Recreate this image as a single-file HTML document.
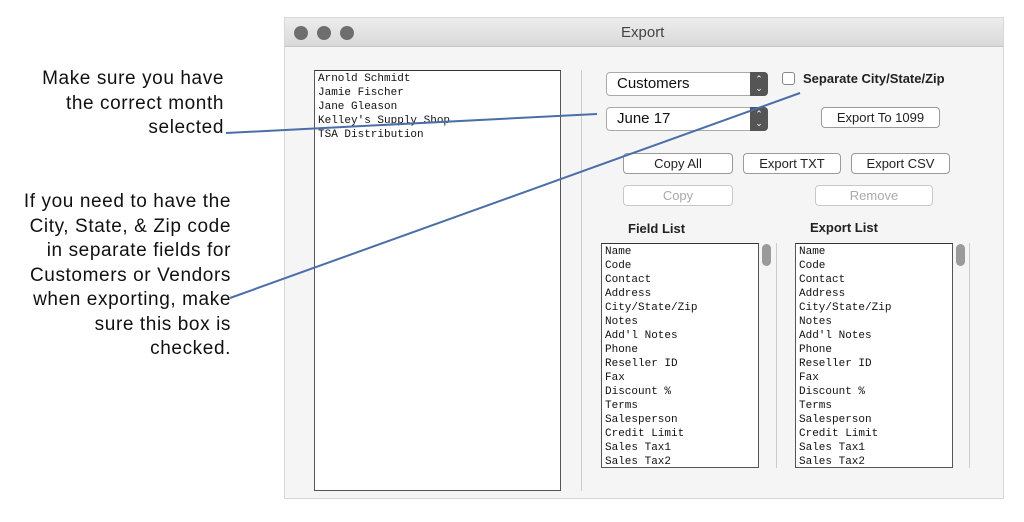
<!DOCTYPE html>
<html><head><style>
*{margin:0;padding:0;box-sizing:border-box}
body{width:1024px;height:522px;background:#fff;position:relative;overflow:hidden;font-family:"Liberation Sans",sans-serif}
.a{position:absolute}
.win{left:284px;top:17px;width:720px;height:482px;background:#f5f5f5;border:1px solid #d8d8d8}
.title{left:0;top:0;width:718px;height:29px;background:linear-gradient(#ededed,#d9d9d9);border-bottom:1px solid #c4c4c4}
.dot{width:14px;height:14px;border-radius:50%;background:#6e6e6e;top:8px}
.box{background:#fff;border:1px solid #555;border-top-color:#333;font-family:"Liberation Mono",monospace;font-size:11px;line-height:14px;color:#111;padding:1px 3px 0;white-space:pre}
.btn{background:#fff;border:1px solid #9a9a9a;border-radius:4px;font-size:13px;text-align:center;color:#222}
.dis{color:#aaa;border-color:#c8c8c8}
.sel{background:#fff;border:1px solid #aaa;border-radius:4px;font-size:15px;padding-left:10px;color:#111}
.arr{position:absolute;right:-1px;top:-1px;width:18px;bottom:-1px;background:#555;border-radius:0 4px 4px 0;color:#fff;font-size:9px;text-align:center;line-height:9px;padding-top:3px}
.txt{font-size:19px;letter-spacing:0.6px;color:#111;text-align:right;line-height:24.5px}
.sep{width:1px;background:#ccc}
.thumb{width:9px;height:22px;background:#9a9a9a;border-radius:5px}
</style></head><body>
<div class="a txt" style="left:0px;top:67px;width:224px">Make sure you have<br>the correct month<br>selected</div>
<div class="a txt" style="left:0px;top:190px;width:231px">If you need to have the<br>City, State, &amp; Zip code<br>in separate fields for<br>Customers or Vendors<br>when exporting, make<br>sure this box is<br>checked.</div>
<div class="a win">
 <div class="a title"></div>
 <div class="a dot" style="left:9px"></div><div class="a dot" style="left:32px"></div><div class="a dot" style="left:55px"></div>
 <div class="a" style="left:336px;top:6px;font-size:15px;color:#444">Export</div>
</div>
<div class="a box" style="left:314px;top:70px;width:247px;height:421px">Arnold Schmidt
Jamie Fischer
Jane Gleason
Kelley's Supply Shop
TSA Distribution</div>
<div class="a sep" style="left:581px;top:70px;height:421px"></div>
<div class="a sel" style="left:606px;top:72px;width:162px;height:24px;line-height:22px">Customers<div class="arr">⌃<br>⌄</div></div>
<div class="a sel" style="left:606px;top:107px;width:162px;height:24px;line-height:22px">June 17<div class="arr">⌃<br>⌄</div></div>
<div class="a" style="left:782px;top:72px;width:13px;height:13px;border:1px solid #888;border-radius:3px;background:#fff"></div>
<div class="a" style="left:803px;top:71px;font-size:13px;font-weight:bold;color:#222">Separate City/State/Zip</div>
<div class="a btn" style="left:821px;top:107px;width:119px;height:21px;line-height:19px">Export To 1099</div>
<div class="a btn" style="left:623px;top:153px;width:110px;height:21px;line-height:19px">Copy All</div>
<div class="a btn" style="left:743px;top:153px;width:98px;height:21px;line-height:19px">Export TXT</div>
<div class="a btn" style="left:851px;top:153px;width:99px;height:21px;line-height:19px">Export CSV</div>
<div class="a btn dis" style="left:623px;top:185px;width:110px;height:21px;line-height:19px">Copy</div>
<div class="a btn dis" style="left:815px;top:185px;width:118px;height:21px;line-height:19px">Remove</div>
<div class="a" style="left:628px;top:221px;font-size:13px;font-weight:bold;color:#222">Field List</div>
<div class="a" style="left:810px;top:220px;font-size:13px;font-weight:bold;color:#222">Export List</div>
<div class="a box" style="left:601px;top:243px;width:158px;height:225px">Name
Code
Contact
Address
City/State/Zip
Notes
Add'l Notes
Phone
Reseller ID
Fax
Discount %
Terms
Salesperson
Credit Limit
Sales Tax1
Sales Tax2</div>
<div class="a thumb" style="left:762px;top:244px"></div>
<div class="a sep" style="left:776px;top:243px;height:225px"></div>
<div class="a box" style="left:795px;top:243px;width:158px;height:225px">Name
Code
Contact
Address
City/State/Zip
Notes
Add'l Notes
Phone
Reseller ID
Fax
Discount %
Terms
Salesperson
Credit Limit
Sales Tax1
Sales Tax2</div>
<div class="a thumb" style="left:956px;top:244px"></div>
<div class="a sep" style="left:969px;top:243px;height:225px"></div>
<svg class="a" style="left:0;top:0" width="1024" height="522"><g stroke="#4a6fa8" stroke-width="2"><line x1="226" y1="133" x2="597" y2="114"/><line x1="230" y1="298" x2="800" y2="93"/></g></svg>
</body></html>
